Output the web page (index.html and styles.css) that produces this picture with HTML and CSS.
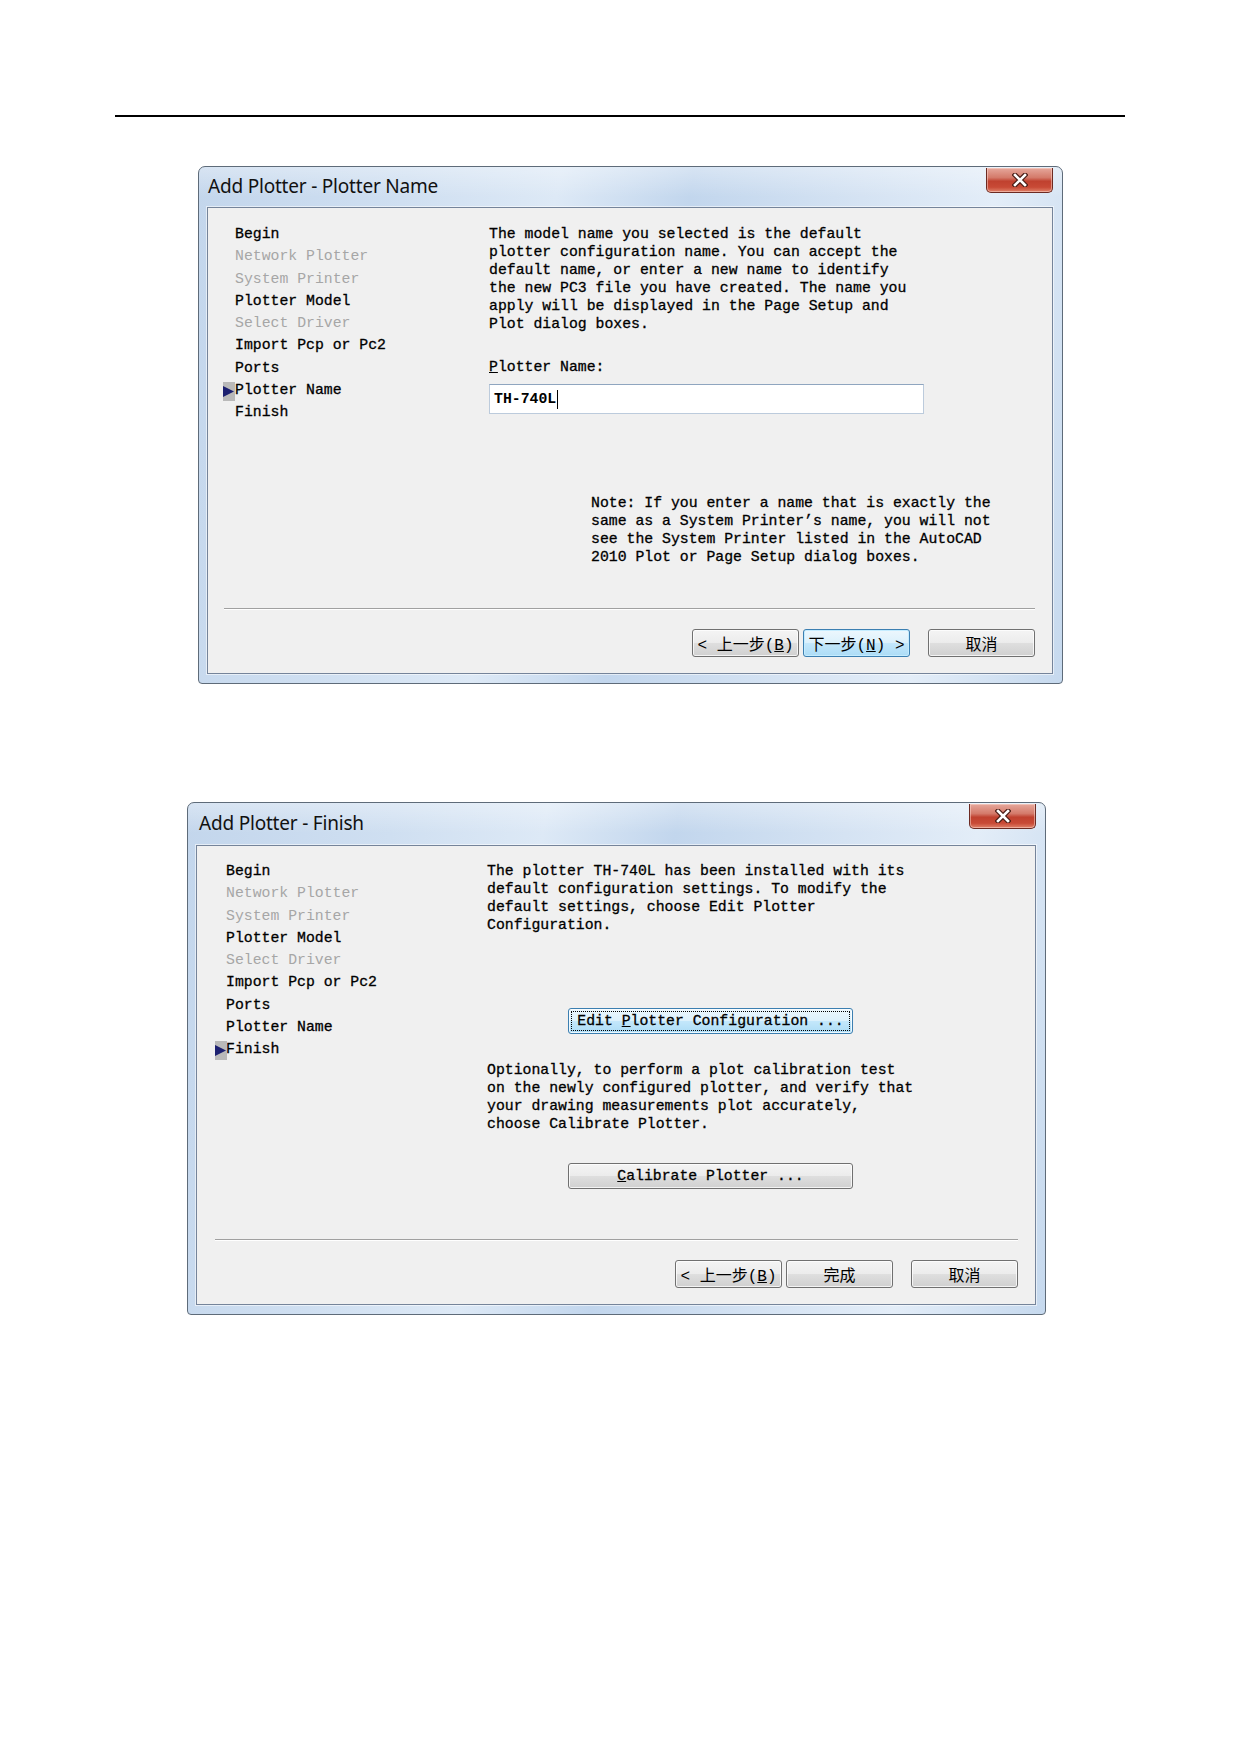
FILE: index.html
```html
<!DOCTYPE html>
<html lang="en">
<head>
<meta charset="utf-8">
<title>Add Plotter</title>
<link rel="stylesheet" href="styles.css">
</head>
<body>
<div class="page">
  <hr class="rule">

  <!-- Wizard step: Plotter Name -->
  <section class="dlg dlg-name">
    <header class="titlebar">
      <span class="title">Add Plotter - Plotter Name</span>
      <span class="close" aria-label="Close">
        <svg width="16" height="14" viewBox="0 0 16 14">
          <path d="M3 2 L13 12 M13 2 L3 12" stroke="#4a1d16" stroke-width="5" stroke-linecap="square"/>
          <path d="M3 2 L13 12 M13 2 L3 12" stroke="#fff" stroke-width="2.6" stroke-linecap="square"/>
        </svg>
      </span>
    </header>
    <div class="client">
      <div class="body">
        <ul class="steps">
          <li class="step">Begin</li>
          <li class="step off">Network Plotter</li>
          <li class="step off">System Printer</li>
          <li class="step">Plotter Model</li>
          <li class="step off">Select Driver</li>
          <li class="step">Import Pcp or Pc2</li>
          <li class="step">Ports</li>
          <li class="step cur"><svg class="marker" width="12" height="19" viewBox="0 0 12 19"><rect width="12" height="19" fill="#b9b9b9"/><polygon points="0,4 11,9.5 0,15" fill="#1c2070"/></svg>Plotter Name</li>
          <li class="step">Finish</li>
        </ul>
        <div class="pane">
          <p>The model name you selected is the default<br>plotter configuration name. You can accept the<br>default name, or enter a new name to identify<br>the new PC3 file you have created. The name you<br>apply will be displayed in the Page Setup and<br>Plot dialog boxes.</p>
          <p class="label"><u>P</u>lotter Name:</p>
          <div class="field"><span>TH-740L</span><span class="caret"></span></div>
          <p class="note">Note: If you enter a name that is exactly the<br>same as a System Printer’s name, you will not<br>see the System Printer listed in the AutoCAD<br>2010 Plot or Page Setup dialog boxes.</p>
        </div>
      </div>
      <div class="sep"></div>
      <div class="actions">
        <span class="btn"><span>&lt; 上一步(<u>B</u>)</span></span>
        <span class="btn btn-default"><span>下一步(<u>N</u>) &gt;</span></span>
        <span class="btn btn-cancel"><span>取消</span></span>
      </div>
    </div>
  </section>

  <!-- Wizard step: Finish -->
  <section class="dlg dlg-finish">
    <header class="titlebar">
      <span class="title">Add Plotter - Finish</span>
      <span class="close" aria-label="Close">
        <svg width="16" height="14" viewBox="0 0 16 14">
          <path d="M3 2 L13 12 M13 2 L3 12" stroke="#4a1d16" stroke-width="5" stroke-linecap="square"/>
          <path d="M3 2 L13 12 M13 2 L3 12" stroke="#fff" stroke-width="2.6" stroke-linecap="square"/>
        </svg>
      </span>
    </header>
    <div class="client">
      <div class="body">
        <ul class="steps">
          <li class="step">Begin</li>
          <li class="step off">Network Plotter</li>
          <li class="step off">System Printer</li>
          <li class="step">Plotter Model</li>
          <li class="step off">Select Driver</li>
          <li class="step">Import Pcp or Pc2</li>
          <li class="step">Ports</li>
          <li class="step">Plotter Name</li>
          <li class="step cur"><svg class="marker" width="12" height="19" viewBox="0 0 12 19"><rect width="12" height="19" fill="#b9b9b9"/><polygon points="0,4 11,9.5 0,15" fill="#1c2070"/></svg>Finish</li>
        </ul>
        <div class="pane">
          <p>The plotter TH-740L has been installed with its<br>default configuration settings. To modify the<br>default settings, choose Edit Plotter<br>Configuration.</p>
          <span class="btn btn-wide btn-focus btn-edit"><span>Edit <u>P</u>lotter Configuration ...</span></span>
          <p class="optional">Optionally, to perform a plot calibration test<br>on the newly configured plotter, and verify that<br>your drawing measurements plot accurately,<br>choose Calibrate Plotter.</p>
          <span class="btn btn-wide btn-calibrate"><span><u>C</u>alibrate Plotter ...</span></span>
        </div>
      </div>
      <div class="sep"></div>
      <div class="actions">
        <span class="btn"><span>&lt; 上一步(<u>B</u>)</span></span>
        <span class="btn"><span>完成</span></span>
        <span class="btn btn-cancel"><span>取消</span></span>
      </div>
    </div>
  </section>
</div>
</body>
</html>
```

FILE: styles.css
```css
* {
  box-sizing: border-box;
}

html,
body {
  margin: 0;
  padding: 0;
  background: #fff;
}

body {
  width: 1242px;
  height: 1754px;
  overflow: hidden;
}

.page {
  padding-top: 115px;
}

.rule {
  display: block;
  margin: 0 0 0 115px;
  width: 1010px;
  height: 2px;
  border: 0;
  background: #000;
}

/* ---------- Aero window frame ---------- */
.dlg {
  display: flex;
  flex-direction: column;
  border: 1px solid #5e6b79;
  border-radius: 7px 7px 4px 4px;
  padding: 0 9px 9px 8px;
  background:
    linear-gradient(180deg, rgba(255, 255, 255, 0.35) 0, rgba(255, 255, 255, 0) 30px),
    linear-gradient(100deg, #c3d6ec 0%, #cfdff1 22%, #dde9f6 38%, #c2d6ed 52%, #d5e3f3 70%, #e3edf8 84%, #c6d9ee 100%);
}

.dlg-name {
  margin: 49px 0 0 198px;
  width: 865px;
  height: 518px;
}

.dlg-finish {
  margin: 118px 0 0 187px;
  width: 859px;
  height: 513px;
}

.titlebar {
  display: flex;
  justify-content: space-between;
  align-items: flex-start;
  height: 40px;
  padding-left: 1px;
}

.dlg-finish .titlebar {
  height: 42px;
  padding-left: 3px;
}

.title {
  margin-top: 8px;
  font-family: "Noto Sans", "Open Sans", sans-serif;
  font-size: 19px;
  line-height: 22px;
  color: #111;
  letter-spacing: -0.2px;
}

.dlg-finish .title {
  margin-top: 9px;
}

.close {
  display: flex;
  align-items: center;
  justify-content: center;
  width: 67px;
  height: 25px;
  margin-top: 1px;
  border: 1px solid #6c2a22;
  border-top: 0;
  border-radius: 0 0 5px 5px;
  background: linear-gradient(180deg, #e6a89c 0%, #d47a6a 40%, #c0412f 55%, #c84a36 80%, #e0826a 100%);
  box-shadow: inset 0 0 0 1px rgba(255, 220, 210, 0.5);
}

/* ---------- client area ---------- */
.client {
  flex: 1;
  display: flex;
  flex-direction: column;
  border: 1px solid #75849a;
  background: #f0f0f0;
  box-shadow: 0 0 0 1px rgba(255, 255, 255, 0.55);
}

.body {
  flex: 1;
  display: grid;
  grid-template-columns: 254px 1fr;
  align-items: start;
  padding: 15px 0 0 27px;
}

.dlg-finish .body {
  grid-template-columns: 261px 1fr;
  padding: 14px 0 0 29px;
}

.steps {
  list-style: none;
  margin: 0;
  padding: 0;
  font-family: "Liberation Mono", monospace;
  font-size: 14.8px;
  line-height: 22.3px;
  color: #000;
  -webkit-text-stroke: 0.3px currentColor;
}

.step {
  position: relative;
  white-space: nowrap;
}

.step.off {
  color: #a6a6a6;
  -webkit-text-stroke: 0;
}

.marker {
  position: absolute;
  left: -12px;
  top: 3px;
}

.dlg-finish .marker {
  left: -11px;
}

.pane {
  padding-top: 2px;
  font-family: "Liberation Mono", monospace;
  font-size: 14.8px;
  line-height: 18px;
  color: #000;
  -webkit-text-stroke: 0.3px currentColor;
}

.pane p {
  margin: 0;
  white-space: nowrap;
}

.pane .label {
  margin-top: 25px;
}

.field {
  display: flex;
  align-items: center;
  width: 435px;
  height: 30px;
  margin-top: 8px;
  padding: 0 4px;
  background: #fff;
  border: 1px solid #bccbdc;
  border-top-color: #8fa5bf;
  font-weight: 700;
  -webkit-text-stroke: 0;
}

.caret {
  display: inline-block;
  width: 1px;
  height: 19px;
  margin-left: 1px;
  background: #000;
}

.pane .note {
  margin: 80px 0 0 102px;
}

.pane .optional {
  margin-top: 27px;
}

/* ---------- etched separator ---------- */
.sep {
  height: 2px;
  margin: 0 17px 0 16px;
  border-top: 1px solid #a0a0a0;
  border-bottom: 1px solid #ffffff;
}

.dlg-finish .sep {
  margin-left: 18px;
}

/* ---------- buttons ---------- */
.actions {
  display: flex;
  justify-content: flex-end;
  gap: 4px;
  padding: 19px 17px 16px 0;
}

.btn {
  position: relative;
  display: flex;
  align-items: center;
  justify-content: center;
  width: 107px;
  height: 28px;
  border: 1px solid #707070;
  border-radius: 3px;
  background: linear-gradient(180deg, #f4f4f4 0%, #ececec 48%, #dedede 52%, #d0d0d0 100%);
  box-shadow: inset 0 0 0 1px rgba(255, 255, 255, 0.75);
  font-family: "Liberation Mono", "Noto Sans CJK SC", monospace;
  font-size: 16px;
  color: #000;
  white-space: nowrap;
}

.btn-default {
  border-color: #3c7fb1;
  background: linear-gradient(180deg, #edf7fd 0%, #dcf1fc 48%, #c3e7fb 52%, #acdcf6 100%);
  box-shadow: inset 0 0 0 1px #c4ecff;
}

.btn-cancel {
  margin-left: 14px;
}

.btn-wide {
  width: 285px;
  height: 26px;
  font-size: 14.8px;
  -webkit-text-stroke: 0.3px currentColor;
}

.btn-edit {
  margin: 74px 0 0 81px;
  border-color: #3c7fb1;
  background: linear-gradient(180deg, #edf7fd 0%, #dcf1fc 48%, #c3e7fb 52%, #acdcf6 100%);
}

/* keyboard focus rectangle drawn over the focused button */
.btn-focus::after {
  content: "";
  position: absolute;
  inset: 2px;
  border: 1px dotted #000;
  border-radius: 1px;
}

.btn-calibrate {
  margin: 30px 0 0 81px;
}
```
